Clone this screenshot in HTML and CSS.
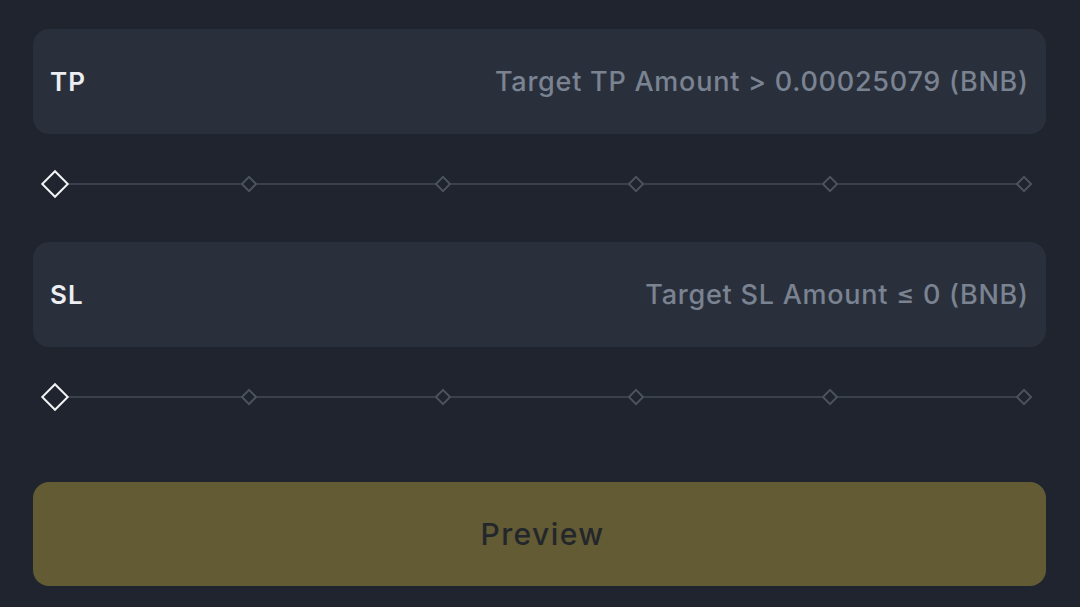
FILE: index.html
```html
<!DOCTYPE html>
<html>
<head>
<meta charset="utf-8">
<link rel="stylesheet" href="styles.css">
</head>
<body>
<div class="panel">
  <div class="field">
    <span class="label">TP</span>
    <span class="placeholder">Target TP Amount &gt; 0.00025079 (BNB)</span>
  </div>
  <div class="slider">
    <div class="mark"><i class="dot big"></i></div>
    <div class="mark"><i class="dot"></i></div>
    <div class="mark"><i class="dot"></i></div>
    <div class="mark"><i class="dot"></i></div>
    <div class="mark"><i class="dot"></i></div>
    <div class="mark"><i class="dot"></i></div>
  </div>
  <div class="field">
    <span class="label">SL</span>
    <span class="placeholder">Target SL Amount ≤ 0 (BNB)</span>
  </div>
  <div class="slider">
    <div class="mark"><i class="dot big"></i></div>
    <div class="mark"><i class="dot"></i></div>
    <div class="mark"><i class="dot"></i></div>
    <div class="mark"><i class="dot"></i></div>
    <div class="mark"><i class="dot"></i></div>
    <div class="mark"><i class="dot"></i></div>
  </div>
  <button class="preview">Preview</button>
</div>
</body>
</html>
```
FILE: styles.css
```css
html, body {
  margin: 0;
  padding: 0;
  background: #1f242e;
  width: 1080px;
  height: 607px;
  overflow: hidden;
  font-family: Inter, "Open Sans", sans-serif;
}
.panel {
  padding: 29px 34px 0 33px;
  display: flex;
  flex-direction: column;
}
.field {
  height: 105px;
  box-sizing: border-box;
  background: #2a303b;
  border-radius: 16px;
  display: flex;
  align-items: center;
  justify-content: space-between;
  padding: 0 18px 0 17px;
}
.label {
  color: #eceef2;
  font-size: 26px;
  font-weight: 600;
  letter-spacing: 1px;
}
.placeholder {
  color: #7a8392;
  font-size: 27px;
  font-weight: 500;
  letter-spacing: 0.75px;
  margin-right: -0.75px;
}
.slider {
  height: 30px;
  margin: 35px 22px 43px 22px;
  display: flex;
  justify-content: space-between;
  align-items: center;
  background: linear-gradient(#3b414c, #3b414c) center / 100% 2px no-repeat;
}
.mark {
  width: 0;
  height: 30px;
  display: flex;
  justify-content: center;
  align-items: center;
}
.dot {
  flex: none;
  width: 12px;
  height: 12px;
  box-sizing: border-box;
  border: 2px solid #4d535e;
  background: #1f242e;
  transform: rotate(45deg);
}
.dot.big {
  width: 20px;
  height: 20px;
  border: 2px solid #f2f3f5;
}
.preview {
  margin-top: 27px;
  height: 104px;
  border: none;
  border-radius: 16px;
  background: #625b33;
  color: #23272c;
  font-family: Inter, "Open Sans", sans-serif;
  font-size: 30px;
  font-weight: 500;
  letter-spacing: 1.4px;
  padding: 0 0 0 6px;
}
```
